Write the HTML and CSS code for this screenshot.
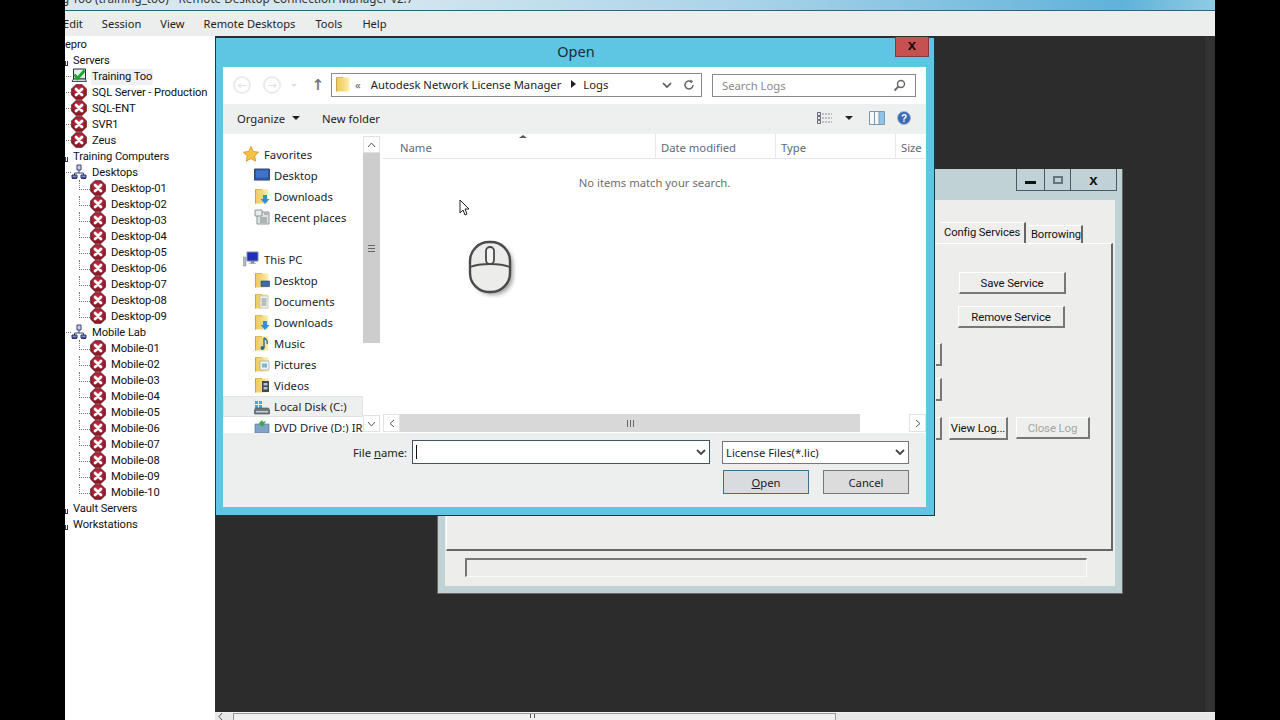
FILE: index.html
```html
<!DOCTYPE html>
<html lang="en">
<head>
<meta charset="utf-8">
<title>Remote Desktop Connection Manager</title>
<link rel="stylesheet" href="styles.css">
</head>
<body>
<svg class="defs" width="0" height="0" aria-hidden="true">
  <defs>
    <linearGradient id="fg" x1="0" x2="1" y1="0" y2="0"><stop offset="0" stop-color="#eec85c"/><stop offset=".55" stop-color="#f5da7c"/><stop offset="1" stop-color="#fdf0b4"/></linearGradient>
    <radialGradient id="redg" cx=".5" cy=".4" r=".6"><stop offset="0" stop-color="#d03a4c"/><stop offset="1" stop-color="#7c1220"/></radialGradient>
    <symbol id="err" viewBox="0 0 16 16"><path d="M5 .4h6L15.600 5v6L11 15.600H5L.4 11V5z" fill="url(#redg)" stroke="#5a1018" stroke-width=".6"/><path d="M5 5l6 6M11 5l-6 6" stroke="#fff" stroke-width="2.800" stroke-linecap="round"/></symbol>
    <symbol id="ok" viewBox="0 0 16 16"><path d="M2.500 1h12v10h-12z" fill="#e8eef0" stroke="#1e2c34"/><path d="M1 13l1.500-2h12l1 2.500H1z" fill="#d4dadd" stroke="#1e2c34" stroke-width=".8"/><path d="M3.500 6.500l3 4L13.500 2.500" fill="none" stroke="#17a82a" stroke-width="2.800"/></symbol>
    <symbol id="net" viewBox="0 0 16 16"><path d="M6 1h4v5H6z" fill="#c6cfe4" stroke="#39427a"/><path d="M8 6v3M3.500 11V9h9v2" fill="none" stroke="#39427a"/><path d="M1 11h5v3H1zM10 11h5v3h-5z" fill="#7b8ad0" stroke="#2a3060"/><path d="M1 14.500h5M10 14.500h5" stroke="#2a3060"/></symbol>
    <symbol id="star" viewBox="0 0 16 16"><path d="M8 .6l2.300 4.900 5.300.7-3.900 3.700 1 5.300L8 12.600 3.300 15.200l1-5.300L.4 6.200l5.300-.7z" fill="#f5c242" stroke="#d18f2a" stroke-width=".8"/></symbol>
    <symbol id="monitor" viewBox="0 0 16 16"><path d="M.5 2h15v11H.5z" fill="#2f58ad" stroke="#3a4a66"/><path d="M2 3.500h12v7H2z" fill="#3f73c9"/><path d="M.5 13.500h15" stroke="#8b99ad"/></symbol>
    <symbol id="folder" viewBox="0 0 16 16"><path d="M1 1.500h13.500v14H1z" fill="url(#fg)"/><path d="M1.500 1.500v14" stroke="#c9a84a"/><path d="M1 1.500h7" stroke="#d8bb5e"/></symbol>
    <symbol id="down" viewBox="0 0 16 16"><use href="#folder"/><path d="M9 7h4v4h2.500L11 16l-4.500-5H9z" fill="#2f8fd8"/></symbol>
    <symbol id="recent" viewBox="0 0 16 16"><path d="M3 3h12v12H3z" fill="#dfe3e3" stroke="#8c9494"/><path d="M1 1h7v6H1z" fill="#e8ecec" stroke="#8c9494"/><path d="M6 9h7M6 11h7M6 13h7M10 5h4" stroke="#7a8585"/></symbol>
    <symbol id="dsk" viewBox="0 0 16 16"><use href="#folder"/><path d="M7 9h8.500v5.500H7z" fill="#3a6db0" stroke="#2b3f60" stroke-width=".6"/></symbol>
    <symbol id="docs" viewBox="0 0 16 16"><use href="#folder"/><path d="M6 3h8v12H6z" fill="#f2f2ec" stroke="#9aa" stroke-width=".5"/><path d="M7.500 6h5M7.500 8h5M7.500 10h5M7.500 12h5" stroke="#7f8a96"/></symbol>
    <symbol id="music" viewBox="0 0 16 16"><use href="#folder"/><path d="M10 3v10M10 3c2 1 4 2 3 6" fill="none" stroke="#2a6a9c" stroke-width="1.400"/><circle cx="8.500" cy="13" r="2" fill="#2a6a9c"/></symbol>
    <symbol id="pics" viewBox="0 0 16 16"><use href="#folder"/><path d="M6 5h9v9H6z" fill="#eef2f2" stroke="#8a9a9a" stroke-width=".6"/><path d="M8 7.500h5v4H8z" fill="#7fb4cf"/></symbol>
    <symbol id="vids" viewBox="0 0 16 16"><use href="#folder"/><path d="M8 4h7v11H8z" fill="#3d4a52"/><path d="M9.500 6h4v2.500h-4zM9.500 10h4v2.500h-4z" fill="#b4c4cc"/></symbol>
    <symbol id="disk" viewBox="0 0 16 16"><path d="M1 2h3v3H1zM5 2h3v3H5zM1 6h3v3H1zM5 6h3v3H5z" fill="#2fb4d8"/><path d="M.5 11l1-2h13l1 2v4H.5z" fill="#6f7a80" stroke="#40484c" stroke-width=".6"/><path d="M2 12h12v1.500H2z" fill="#c4ccd0"/></symbol>
    <symbol id="dvd" viewBox="0 0 16 16"><path d="M1 5h14v9H1z" fill="#7fa4c8" stroke="#4a6a8c" stroke-width=".6"/><path d="M7 7L5 4l3-3 1 2 3-1-3 5 2 1z" fill="#3aa848"/></symbol>
    <symbol id="pc" viewBox="0 0 16 16"><path d="M0 6h3v9H0z" fill="#b4bcc4" stroke="#7c8488" stroke-width=".5"/><path d="M4 1h11v9H4z" fill="#2030b8" stroke="#7c8c9c"/><path d="M8 10h3v2H8zM6 12.500h7" fill="#8c98a4" stroke="#6c7884" stroke-width=".5"/></symbol>
  </defs>
</svg>

<div class="app">
  <header class="titlebar"><span class="title-text">g Too (training_too) - Remote Desktop Connection Manager v2.7</span></header>
  <nav class="menubar">
    <span class="menu-item first">Edit</span>
    <span class="menu-item">Session</span>
    <span class="menu-item">View</span>
    <span class="menu-item">Remote Desktops</span>
    <span class="menu-item">Tools</span>
    <span class="menu-item">Help</span>
  </nav>
  <div class="workspace">
    <aside class="tree">
      <div class="node root">epro</div>
      <div class="node group"><i class="stub"></i>Servers</div>
      <div class="node l2 sel-row"><svg class="ti"><use href="#ok"/></svg><span class="sel">Training Too</span></div>
      <div class="node l2"><svg class="ti"><use href="#err"/></svg>SQL Server - Production</div>
      <div class="node l2"><svg class="ti"><use href="#err"/></svg>SQL-ENT</div>
      <div class="node l2"><svg class="ti"><use href="#err"/></svg>SVR1</div>
      <div class="node l2"><svg class="ti"><use href="#err"/></svg>Zeus</div>
      <div class="node group"><i class="stub"></i>Training Computers</div>
      <div class="node l2"><svg class="ti"><use href="#net"/></svg>Desktops</div>
      <div class="node l3"><svg class="ti"><use href="#err"/></svg>Desktop-01</div>
      <div class="node l3"><svg class="ti"><use href="#err"/></svg>Desktop-02</div>
      <div class="node l3"><svg class="ti"><use href="#err"/></svg>Desktop-03</div>
      <div class="node l3"><svg class="ti"><use href="#err"/></svg>Desktop-04</div>
      <div class="node l3"><svg class="ti"><use href="#err"/></svg>Desktop-05</div>
      <div class="node l3"><svg class="ti"><use href="#err"/></svg>Desktop-06</div>
      <div class="node l3"><svg class="ti"><use href="#err"/></svg>Desktop-07</div>
      <div class="node l3"><svg class="ti"><use href="#err"/></svg>Desktop-08</div>
      <div class="node l3"><svg class="ti"><use href="#err"/></svg>Desktop-09</div>
      <div class="node l2"><svg class="ti"><use href="#net"/></svg>Mobile Lab</div>
      <div class="node l3"><svg class="ti"><use href="#err"/></svg>Mobile-01</div>
      <div class="node l3"><svg class="ti"><use href="#err"/></svg>Mobile-02</div>
      <div class="node l3"><svg class="ti"><use href="#err"/></svg>Mobile-03</div>
      <div class="node l3"><svg class="ti"><use href="#err"/></svg>Mobile-04</div>
      <div class="node l3"><svg class="ti"><use href="#err"/></svg>Mobile-05</div>
      <div class="node l3"><svg class="ti"><use href="#err"/></svg>Mobile-06</div>
      <div class="node l3"><svg class="ti"><use href="#err"/></svg>Mobile-07</div>
      <div class="node l3"><svg class="ti"><use href="#err"/></svg>Mobile-08</div>
      <div class="node l3"><svg class="ti"><use href="#err"/></svg>Mobile-09</div>
      <div class="node l3"><svg class="ti"><use href="#err"/></svg>Mobile-10</div>
      <div class="node group"><i class="stub"></i>Vault Servers</div>
      <div class="node group"><i class="stub"></i>Workstations</div>
    </aside>

    <div class="stage">
      <div class="canvas">
        <section class="bgwin">
          <div class="bg-title">
            <span class="wbtn min"><i></i></span>
            <span class="wbtn max"><i></i></span>
            <span class="wbtn cls">x</span>
          </div>
          <div class="bg-client">
            <div class="tabs">
              <span class="tab active">Config Services</span>
              <span class="tab">Borrowing</span>
            </div>
            <div class="panel">
              <button class="btn save">Save Service</button>
              <button class="btn remove">Remove Service</button>
              <span class="stubbtn s1"></span>
              <span class="stubbtn s2"></span>
              <div class="log-row">
                <span class="stubbtn s3"></span>
                <button class="btn view">View Log...</button>
                <button class="btn closelog">Close Log</button>
              </div>
            </div>
            <div class="statusbox"></div>
          </div>
        </section>

        <section class="dialog">
          <div class="dlg-title"><span class="dlg-name">Open</span><span class="dlg-close">x</span></div>
          <div class="dlg-client">
            <div class="addr-row">
              <span class="circ">&#8592;</span>
              <span class="circ c2">&#8594;</span>
              <span class="hist"></span>
              <span class="up">&#8593;</span>
              <div class="addr">
                <svg class="ni"><use href="#folder"/></svg>
                <span class="chev">&laquo;</span>
                <span>Autodesk Network License Manager</span>
                <span class="crumb"></span>
                <span>Logs</span>
                <span class="addr-drop"><svg width="10" height="7" viewBox="0 0 10 7"><path d="M1 1l4 4 4-4" fill="none" stroke="#555" stroke-width="1.600"/></svg></span>
                <svg class="refresh" width="12" height="12" viewBox="0 0 12 12"><path d="M10 6a4 4 0 1 1-1.500-3.200" fill="none" stroke="#666" stroke-width="1.500"/><path d="M7 .5l3.200 1.800L8 4.500z" fill="#666"/></svg>
              </div>
              <div class="search">
                <span>Search Logs</span>
                <svg width="13" height="13" viewBox="0 0 13 13"><circle cx="8" cy="5" r="3.500" fill="none" stroke="#666" stroke-width="1.400"/><path d="M5.500 7.500L1.500 11.500" stroke="#666" stroke-width="1.800"/></svg>
              </div>
            </div>
            <div class="toolbar">
              <span>Organize</span><span class="caret"></span>
              <span class="newf">New folder</span>
              <span class="spacer"></span>
              <svg class="tb-view" width="16" height="12" viewBox="0 0 16 12"><path d="M.5.500h3v3h-3zM.5 4.500h3v3h-3zM.5 8.500h3v3h-3z" fill="none" stroke="#667"/><path d="M5 2h10M5 6h10M5 10h10" stroke="#889" stroke-dasharray="2 1"/></svg>
              <span class="caret c3"></span>
              <svg class="tb-pane" width="16" height="14" viewBox="0 0 16 14"><path d="M.5.500h15v13H.5z" fill="#f6f9fb" stroke="#7d98aa"/><path d="M10 1h5v12h-5z" fill="#8fc3ea"/><path d="M5.500 1v12M10 1v12" stroke="#7d98aa"/></svg>
              <svg class="tb-help" width="14" height="14" viewBox="0 0 14 14"><circle cx="7" cy="7" r="6.500" fill="#3b69b8" stroke="#9fb2cf"/><text x="7" y="10.500" text-anchor="middle" font-size="10" font-weight="700" fill="#fff" font-family="Liberation Sans, sans-serif">?</text></svg>
            </div>
            <div class="browser">
              <div class="navpane">
                <div class="nav-item head"><svg class="ni"><use href="#star"/></svg>Favorites</div>
                <div class="nav-item"><svg class="ni"><use href="#monitor"/></svg>Desktop</div>
                <div class="nav-item"><svg class="ni"><use href="#down"/></svg>Downloads</div>
                <div class="nav-item"><svg class="ni"><use href="#recent"/></svg>Recent places</div>
                <div class="nav-item blank"></div>
                <div class="nav-item head"><svg class="ni"><use href="#pc"/></svg>This PC</div>
                <div class="nav-item"><svg class="ni"><use href="#dsk"/></svg>Desktop</div>
                <div class="nav-item"><svg class="ni"><use href="#docs"/></svg>Documents</div>
                <div class="nav-item"><svg class="ni"><use href="#down"/></svg>Downloads</div>
                <div class="nav-item"><svg class="ni"><use href="#music"/></svg>Music</div>
                <div class="nav-item"><svg class="ni"><use href="#pics"/></svg>Pictures</div>
                <div class="nav-item"><svg class="ni"><use href="#vids"/></svg>Videos</div>
                <div class="nav-item current"><svg class="ni"><use href="#disk"/></svg>Local Disk (C:)</div>
                <div class="nav-item"><svg class="ni"><use href="#dvd"/></svg>DVD Drive (D:) IR3_SSS_X64</div>
              </div>
              <div class="vscroll">
                <span class="sb-btn"><svg width="9" height="6" viewBox="0 0 9 6"><path d="M1 5l3.500-4L8 5" fill="none" stroke="#555"/></svg></span>
                <span class="vthumb"><i></i></span>
                <span class="sb-gap"></span>
                <span class="sb-btn"><svg width="9" height="6" viewBox="0 0 9 6"><path d="M1 1l3.500 4L8 1" fill="none" stroke="#555"/></svg></span>
              </div>
              <div class="listpane">
                <div class="cols">
                  <span class="col name">Name<i class="sort"></i></span>
                  <span class="col">Date modified</span>
                  <span class="col">Type</span>
                  <span class="col">Size</span>
                </div>
                <div class="empty">No items match your search.</div>
                <div class="hscroll">
                  <span class="sb-btn h"><svg width="6" height="9" viewBox="0 0 6 9"><path d="M5 1L1 4.500 5 8" fill="none" stroke="#555"/></svg></span>
                  <span class="hthumb"><i></i></span>
                  <span class="sb-gap"></span>
                  <span class="sb-btn h"><svg width="6" height="9" viewBox="0 0 6 9"><path d="M1 1l4 3.500L1 8" fill="none" stroke="#555"/></svg></span>
                </div>
                <svg class="cursor" width="13" height="19" viewBox="0 0 13 19"><path d="M1 1v13l3-3 2 5 2-1-2-5h4z" fill="#fff" stroke="#222"/></svg>
                <svg class="mouse" width="48" height="58" viewBox="0 0 48 58">
                  <defs><filter id="sh" x="-20%" y="-20%" width="150%" height="150%"><feGaussianBlur stdDeviation="2"/></filter></defs>
                  <rect x="5" y="5" width="40" height="50" rx="19" fill="#666" opacity=".6" filter="url(#sh)"/>
                  <rect x="2" y="2" width="40" height="50" rx="19" fill="#ececea" stroke="#4a4a4a" stroke-width="2.400"/>
                  <path d="M2 27c10-4 30-4 40 0" fill="none" stroke="#4a4a4a" stroke-width="1.800"/>
                  <rect x="18" y="7" width="8" height="17" rx="4" fill="#f4f4f4" stroke="#4a4a4a" stroke-width="1.800"/>
                </svg>
              </div>
            </div>
            <div class="dlg-bottom">
              <div class="file-row">
                <label class="fname">File <u>n</u>ame:</label>
                <div class="finput"><i class="caretbar"></i><svg width="10" height="7" viewBox="0 0 10 7"><path d="M1 1l4 4 4-4" fill="none" stroke="#444" stroke-width="1.800"/></svg></div>
                <div class="ffilter"><span>License Files(*.lic)</span><svg width="10" height="7" viewBox="0 0 10 7"><path d="M1 1l4 4 4-4" fill="none" stroke="#444" stroke-width="1.800"/></svg></div>
              </div>
              <div class="act-row">
                <button class="dbtn primary"><u>O</u>pen</button>
                <button class="dbtn">Cancel</button>
              </div>
            </div>
          </div>
        </section>
        <div class="vstrip"></div>
      </div>
      <div class="bottom-scroll"><span class="ba"><svg width="5" height="7" viewBox="0 0 5 7"><path d="M4 0L1 3.500 4 7" fill="none" stroke="#555"/></svg></span><span class="bthumb"><i></i></span></div>
    </div>
  </div>
</div>
</body>
</html>
```

FILE: styles.css
```css
* { box-sizing: border-box; }
html, body { margin: 0; height: 100%; background: #000; overflow: hidden; }
body { font-family: "Noto Sans", "Liberation Sans", sans-serif; font-size: 11.25px; color: #222; }
.defs { position: absolute; }
button { font: inherit; color: inherit; padding: 0; cursor: default; }
.app { margin-left: 65px; width: 1150px; height: 720px; display: flex; flex-direction: column; overflow: hidden; background: #fff; }

.titlebar { height: 11px; overflow: hidden; background: linear-gradient(90deg, #dbe7ec 0, #d2e5ef 30%, #a7d3e8 60%, #5fb2da 92%, #8fcbe3 100%); border-bottom: 1px solid #2f6480; }
.title-text { display: block; margin-top: -10px; line-height: 16px; font-size: 11.7px; color: #333; white-space: nowrap; margin-left: -3px; }

.menubar { height: 25px; background: #eceded; display: flex; align-items: center; gap: 19px; overflow: hidden; padding-bottom: 1px; }
.menu-item { color: #222; font-size: 11.1px; white-space: nowrap; }
.menu-item.first { margin-left: -2px; }
.menu-item:nth-child(5), .menu-item:nth-child(6) { margin-left: 1px; }

.workspace { flex: 1; display: flex; min-height: 0; }

.tree { width: 150px; background: #fff; font-family: Roboto, "Liberation Sans", sans-serif; font-size: 11.2px; letter-spacing: -.1px; overflow: hidden; flex: none; }
.node { position: relative; height: 16px; line-height: 16px; padding-top: 1px; white-space: nowrap; display: flex; align-items: center; color: #111; }
.root { padding-left: 0; }
.group { padding-left: 8px; }
.stub { position: absolute; left: 0; top: 9px; width: 3px; height: 5px; border: 1px solid #334; border-top: 0; }
.ti { width: 16px; height: 16px; flex: none; margin-top: -1px; }
.l2 { padding-left: 6px; }
.l2 .ti { margin-right: 5px; }
.l3 { padding-left: 25px; }
.l3 .ti { margin-right: 5px; }
.l2::before { content: ""; position: absolute; left: 1px; top: 8px; width: 5px; border-top: 1px dotted #777; }
.l3::before { content: ""; position: absolute; left: 14px; top: 0; width: 10px; height: 9px; border-left: 1px dotted #777; border-bottom: 1px dotted #777; }
.sel { background: #eef0f2; padding: 0 1px; margin-left: -1px; }

.stage { flex: 1; display: flex; flex-direction: column; min-width: 0; }
.canvas { flex: 1; position: relative; background: #2c2c2c; overflow: hidden; }
.vstrip { position: absolute; right: 0; top: 0; bottom: 0; width: 10px; background: #323232; }
.bottom-scroll { height: 8px; background: #e8e8e8; display: flex; align-items: flex-start; border-top: 1px solid #f2f2f2; }
.ba { width: 18px; padding-left: 3px; line-height: 0; }
.bthumb { width: 603px; height: 7px; background: #f0f0f0; border: 1px solid #999; border-bottom: 0; display: flex; justify-content: center; padding-right: 4px; }
.bthumb i { width: 5px; height: 4px; border-left: 1px solid #555; border-right: 1px solid #555; }

/* background window */
.bgwin { position: absolute; left: 222px; top: 133px; width: 686px; height: 425px; background: #c0d2d6; border: 1px solid #666; border-top: 0; display: flex; flex-direction: column; z-index: 1; }
.bg-title { height: 31px; display: flex; justify-content: flex-end; padding-right: 5px; flex: none; }
.wbtn { height: 22px; border: 1px solid #4b5a60; border-top: 0; border-left-width: 1px; display: flex; align-items: center; justify-content: center; font-weight: 700; font-family: "Liberation Sans", sans-serif; font-size: 15px; color: #111; }
.wbtn.min { width: 29px; }
.wbtn.min i { width: 11px; height: 3px; background: #111; margin-top: 6px; }
.wbtn.max { width: 26px; border-left: 0; }
.wbtn.max i { width: 10px; height: 8px; border: 2px solid #66757a; }
.wbtn.cls { width: 46px; border-left: 0; }
.bg-client { flex: 1; margin: 0 7px 7px 7px; background: #edeeec; display: flex; flex-direction: column; padding-top: 22px; font-family: Roboto, "Liberation Sans", sans-serif; letter-spacing: -.1px; }
.tabs { display: flex; align-items: flex-end; height: 21px; padding-left: 495px; gap: 3px; flex: none; }
.tab { width: 54px; height: 18px; line-height: 17px; padding: 0 0 0 2px; white-space: nowrap; font-size: 11.2px; border-right: 2px solid #666; color: #111; background: #eeefed; border-top: 1px solid #fff; }
.tab.active { width: 86px; height: 21px; line-height: 19px; padding: 0 0 0 4px; }
.panel { height: 308px; margin-left: 1px; width: 667px; border-right: 2px solid #666; border-bottom: 2px solid #666; border-top: 1px solid #fff; border-left: 1px solid #fff; display: flex; flex-direction: column; align-items: flex-start; padding-left: 489px; flex: none; }
.btn { background: #eeefed; border: 1px solid #fff; border-right: 2px solid #777; border-bottom: 2px solid #777; font-size: 11.4px; color: #111; white-space: nowrap; letter-spacing: -.1px; }
.save { width: 107px; height: 22px; margin: 28px 0 0 23px; }
.remove { width: 107px; height: 22px; margin: 12px 0 0 22px; }
.stubbtn { display: block; width: 6px; height: 23px; border-right: 2px solid #777; border-bottom: 2px solid #777; border-top: 1px solid #fff; }
.s1 { margin-top: 15px; }
.s2 { margin-top: 12px; }
.s3 { margin-top: 0; }
.log-row { display: flex; align-items: flex-start; margin-top: 16px; }
.view { width: 59px; height: 23px; margin-left: 7px; }
.closelog { width: 74px; height: 22px; margin-left: 8px; color: #a5a5a5; }
.statusbox { width: 622px; height: 19px; margin: 7px 0 0 20px; border-top: 2px solid #777; border-left: 2px solid #777; border-right: 1px solid #fafafa; border-bottom: 1px solid #fafafa; }

/* open dialog */
.dialog { position: absolute; left: 0; top: 1px; width: 720px; height: 479px; background: #5ec5e3; border: 1px solid #163848; display: flex; flex-direction: column; z-index: 2; padding: 0 8px 8px 7px; }
.dlg-title { height: 29px; position: relative; text-align: center; line-height: 27px; font-size: 14.5px; color: #1c2c34; flex: none; padding-left: 3px; }
.dlg-name { display: block; }
.dlg-close { position: absolute; right: -3px; top: -1px; width: 34px; height: 20px; background: #c75050; border: 1px solid #7e3a3a; border-top: 0; color: #111; font: 700 15px/15px "Liberation Sans", sans-serif; }
.dlg-client { flex: 1; background: #fff; display: flex; flex-direction: column; min-height: 0; }

.addr-row { height: 37px; display: flex; align-items: center; flex: none; padding-left: 10px; padding-bottom: 1px; }
.circ { width: 18px; height: 18px; border: 2px solid #ebebeb; border-radius: 50%; display: flex; align-items: center; justify-content: center; color: #e0e0e0; font-size: 11px; line-height: 1; font-family: "DejaVu Sans", sans-serif; flex: none; }
.c2 { margin-left: 12px; }
.hist { width: 0; height: 0; margin-left: 10px; border: 3px solid transparent; border-top: 3px solid #e0e0e0; margin-top: 3px; }
.up { margin-left: 14px; width: 14px; text-align: center; font: 700 15px/1 "DejaVu Sans", sans-serif; color: #777; }
.addr { margin-left: 6px; width: 371px; height: 24px; border: 1px solid #8a8a8a; display: flex; align-items: center; padding: 0 0 2px 3px; position: relative; white-space: nowrap; color: #222; }
.chev { margin: 0 10px 0 4px; color: #666; }
.crumb { width: 0; height: 0; border: 4px solid transparent; border-left: 5px solid #222; border-right: 0; margin: 0 7px 0 10px; }
.addr-drop { position: absolute; right: 29px; top: 8px; line-height: 0; }
.refresh { position: absolute; right: 6px; top: 5px; }
.search { margin-left: 10px; width: 204px; height: 23px; border: 1px solid #8a8a8a; display: flex; align-items: center; justify-content: space-between; padding: 0 9px; color: #888; }

.toolbar { height: 30px; background: #eef0f0; display: flex; align-items: center; padding: 0 15px 2px 14px; flex: none; color: #222; }
.caret { width: 0; height: 0; border: 4px solid transparent; border-top: 4px solid #222; border-bottom: 0; margin-left: 7px; }
.newf { margin-left: 22px; }
.spacer { flex: 1; }
.c3 { margin: 0 0 0 12px; }
.tb-pane { margin-left: 16px; }
.tb-help { margin-left: 12px; }

.browser { flex: 1; display: flex; min-height: 0; height: 300px; }
.navpane { width: 140px; padding-top: 10px; overflow: hidden; flex: none; }
.nav-item { height: 21px; display: flex; align-items: center; padding: 0 0 1px 31px; white-space: nowrap; color: #222; overflow: hidden; }
.nav-item .ni { margin-right: 4px; }
.nav-item.head { padding-left: 20px; }
.nav-item.head .ni { margin-right: 5px; }
.nav-item.current { background: #eef0f0; border: 1px solid #e0e3e3; padding-left: 30px; padding-bottom: 0; }
.ni { width: 16px; height: 16px; flex: none; }
.vscroll { width: 18px; display: flex; flex-direction: column; padding: 2px 1px 1px 0; flex: none; }
.sb-btn { height: 17px; width: 17px; flex: none; border: 1px solid #e2e2e2; background: #fff; display: flex; align-items: center; justify-content: center; }
.vthumb { height: 190px; background: #cdcdcd; display: flex; align-items: center; justify-content: center; flex: none; }
.vthumb i { width: 7px; height: 7px; border-top: 1px solid #666; border-bottom: 1px solid #666; background: linear-gradient(#666, #666) center/100% 1px no-repeat; }
.sb-gap { flex: 1; }
.listpane { flex: 1; position: relative; display: flex; flex-direction: column; min-width: 0; padding-left: 2px; }
.cols { height: 25px; display: grid; grid-template-columns: 272px 120px 120px 1fr; border-bottom: 1px solid #e4e7ea; align-items: center; color: #5b6a78; overflow: hidden; flex: none; }
.col { height: 100%; display: flex; align-items: center; padding-left: 5px; border-left: 1px solid #e6e9ec; white-space: nowrap; padding-top: 2px; }
.col.name { padding-left: 17px; border-left: 0; position: relative; }
.sort { position: absolute; left: 136px; top: 1px; width: 0; height: 0; border: 4px solid transparent; border-bottom: 3px solid #556; border-top: 0; }
.empty { flex: 1; text-align: center; padding-top: 16px; color: #6d6d6d; }
.hscroll { height: 19px; display: flex; flex: none; }
.sb-btn.h { height: 18px; }
.hthumb { width: 460px; height: 18px; background: #d8d8d8; display: flex; align-items: center; justify-content: center; flex: none; }
.hthumb i { width: 7px; height: 7px; border-left: 1px solid #666; border-right: 1px solid #666; background: linear-gradient(#666, #666) center/1px 100% no-repeat; }
.cursor { position: absolute; left: 78px; top: 65px; }
.mouse { position: absolute; left: 87px; top: 106px; }

.dlg-bottom { height: 74px; background: #edeeee; flex: none; display: flex; flex-direction: column; align-items: flex-start; padding-top: 7px; }
.file-row { display: flex; align-items: center; height: 24px; }
.fname { margin-left: 130px; width: 59px; white-space: nowrap; color: #222; }
.finput { width: 298px; height: 24px; background: #fff; border: 1px solid #3d5566; display: flex; align-items: center; justify-content: space-between; padding: 0 3px 0 3px; }
.caretbar { width: 1px; height: 14px; background: #111; }
.ffilter { margin-left: 12px; width: 187px; height: 23px; background: #fff; border: 1px solid #777; display: flex; align-items: center; justify-content: space-between; padding: 0 3px; color: #222; white-space: nowrap; }
.act-row { display: flex; gap: 14px; margin: 6px 0 0 500px; }
.dbtn { width: 86px; height: 24px; background: #dcdcdc; border: 1px solid #777; color: #222; }
.dbtn.primary { background: #d8dcde; border-color: #3d6f8c; }
```
